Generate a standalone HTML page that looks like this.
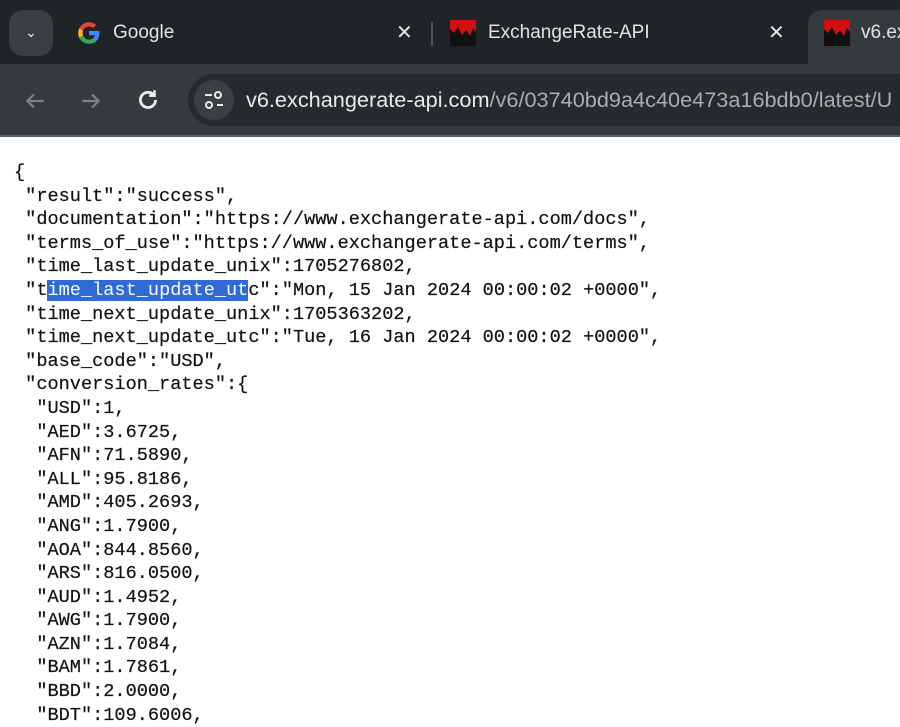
<!DOCTYPE html>
<html><head><meta charset="utf-8"><style>
*{margin:0;padding:0;box-sizing:border-box}
body{width:900px;height:720px;overflow:hidden;background:#fff;font-family:"Liberation Sans",sans-serif;position:relative}
.strip{position:absolute;left:0;top:0;width:900px;height:64px;background:#1f2427}
.tb{position:absolute;left:0;top:64px;width:900px;height:72px;background:#353a3e}
.line{position:absolute;left:0;top:135px;width:900px;height:2px;background:#5b6166}
.dd{position:absolute;left:9px;top:10px;width:44px;height:46px;border-radius:14px;background:#3a3f43;color:#e8eaed;font-size:14px;text-align:center;line-height:44px}
.tab{position:absolute;color:#e3e3e3;font-size:19px;top:22px}
.x{position:absolute;color:#e3e3e3;font-size:20px;top:20px}
.active{position:absolute;left:808px;top:10px;width:120px;height:56px;background:#353a3e;border-radius:14px 14px 0 0}
.url{position:absolute;left:188px;top:74px;width:740px;height:52px;border-radius:26px;background:#262a2e}
.urltext{position:absolute;left:246px;top:87px;font-size:21.7px;color:#e8eaed;white-space:nowrap}
.urltext span{color:#a8adb2}
pre{position:absolute;left:14px;top:161px;font-family:"Liberation Mono",monospace;font-size:18.6px;line-height:23.6px;color:#111;-webkit-text-stroke:0.2px #111}
.sel{background:#2f6ad6;color:#fff;-webkit-text-stroke:0}
</style></head><body>
<div class="strip"></div>
<div class="active"></div>
<div class="tb"></div>
<div class="line"></div>
<div class="dd">&#8964;</div>
<svg style="position:absolute;left:76px;top:20px" width="26" height="26" viewBox="0 0 24 24"><path d="M21.6 12.2c0-.7-.1-1.4-.2-2H12v3.9h5.4a4.6 4.6 0 0 1-2 3v2.5h3.2c1.9-1.7 3-4.3 3-7.4z" fill="#4285f4"/><path d="M12 22c2.7 0 5-.9 6.6-2.4l-3.2-2.5c-.9.6-2 1-3.4 1-2.6 0-4.800-1.800-5.600-4.100H3.1v2.6A10 10 0 0 0 12 22z" fill="#34a853"/><path d="M6.4 14a6 6 0 0 1 0-3.9V7.5H3.1a10 10 0 0 0 0 9z" fill="#fbbc05"/><path d="M12 6c1.5 0 2.8.5 3.8 1.5l2.9-2.9A10 10 0 0 0 3.1 7.5l3.3 2.6C7.2 7.8 9.4 6 12 6z" fill="#ea4335"/></svg>
<div class="tab" style="left:113px">Google</div>
<div class="x" style="left:396px">✕</div>
<div style="position:absolute;left:431px;top:22px;width:2px;height:24px;background:#555"></div>
<svg style="position:absolute;left:450px;top:20px" width="26" height="26" viewBox="0 0 26 26"><rect width="26" height="26" fill="#111"/><path d="M0 0h26v12l-3-4-3 8-4-6-4 5-4-8-4 6-4-4z" fill="#d01010"/></svg>
<div class="tab" style="left:488px">ExchangeRate-API</div>
<div class="x" style="left:768px">✕</div>
<svg style="position:absolute;left:824px;top:20px" width="26" height="26" viewBox="0 0 26 26"><rect width="26" height="26" fill="#111"/><path d="M0 0h26v12l-3-4-3 8-4-6-4 5-4-8-4 6-4-4z" fill="#d01010"/></svg>
<div class="tab" style="left:861px">v6.ex</div>
<svg style="position:absolute;left:22px;top:88px" width="26" height="26" viewBox="0 0 24 24" fill="none" stroke="#7d8287" stroke-width="2"><path d="M20 12H5M11 6l-6 6 6 6"/></svg>
<svg style="position:absolute;left:78px;top:88px" width="26" height="26" viewBox="0 0 24 24" fill="none" stroke="#7d8287" stroke-width="2"><path d="M4 12h15M13 6l6 6-6 6"/></svg>
<svg style="position:absolute;left:135px;top:87px" width="26" height="26" viewBox="0 0 24 24" fill="none" stroke="#e8eaed" stroke-width="2.6"><path d="M19 12a7 7 0 1 1-2-5"/><path d="M18 3v5h-5" stroke-width="2.4"/></svg>
<div class="url"></div>
<div style="position:absolute;left:194px;top:80px;width:40px;height:40px;border-radius:20px;background:#3a3f43"></div>
<svg style="position:absolute;left:203px;top:89px" width="22" height="22" viewBox="0 0 22 22" fill="none" stroke="#e8eaed" stroke-width="2"><path d="M2 6h7M14 16h6"/><circle cx="15" cy="6" r="3"/><circle cx="6" cy="16" r="3"/></svg>
<div class="urltext">v6.exchangerate-api.com<span>/v6/03740bd9a4c40e473a16bdb0/latest/U</span></div>
<pre>{
 "result":"success",
 "documentation":"https://www.exchangerate-api.com/docs",
 "terms_of_use":"https://www.exchangerate-api.com/terms",
 "time_last_update_unix":1705276802,
 "t<span class="sel">ime_last_update_ut</span>c":"Mon, 15 Jan 2024 00:00:02 +0000",
 "time_next_update_unix":1705363202,
 "time_next_update_utc":"Tue, 16 Jan 2024 00:00:02 +0000",
 "base_code":"USD",
 "conversion_rates":{
  "USD":1,
  "AED":3.6725,
  "AFN":71.5890,
  "ALL":95.8186,
  "AMD":405.2693,
  "ANG":1.7900,
  "AOA":844.8560,
  "ARS":816.0500,
  "AUD":1.4952,
  "AWG":1.7900,
  "AZN":1.7084,
  "BAM":1.7861,
  "BBD":2.0000,
  "BDT":109.6006,
</pre>
</body></html>
